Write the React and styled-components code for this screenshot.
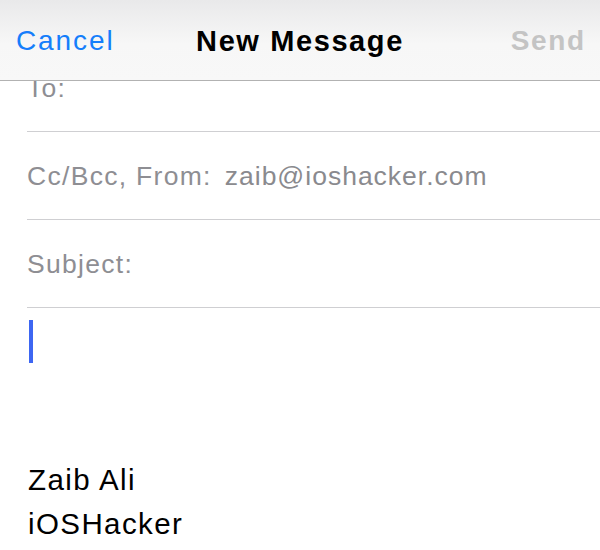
import styled, { createGlobalStyle } from 'styled-components'

const GlobalStyle = createGlobalStyle`
  html, body {
    margin: 0;
    padding: 0;
    background: #ffffff;
  }
  body {
    font-family: "Liberation Sans", Arial, Helvetica, sans-serif;
    -webkit-font-smoothing: antialiased;
  }
`

const Screen = styled.div`
  position: relative;
  width: 600px;
  height: 550px;
  overflow: hidden;
  background: #ffffff;
`

const NavBar = styled.header`
  position: absolute;
  top: 0;
  left: 0;
  right: 0;
  z-index: 2;
  height: 81px;
  box-sizing: border-box;
  padding: 0 16px;
  display: grid;
  grid-template-columns: 1fr auto 1fr;
  align-items: center;
  background: linear-gradient(#e9e9ea, #f7f7f7 55%, #f8f8f8);
  border-bottom: 1.5px solid #b2b2b2;
`

const NavButton = styled.span`
  font-size: 28px;
  padding-top: 2px;
  letter-spacing: ${(p) => (p.$disabled ? '1.6px' : '1.9px')};
  color: ${(p) => (p.$disabled ? '#c4c4c4' : '#157efb')};
  font-weight: ${(p) => (p.$disabled ? 700 : 400)};
  justify-self: ${(p) => (p.$right ? 'end' : 'start')};
  margin-right: ${(p) => (p.$right ? '-1.6px' : '0')};
`

const Title = styled.h1`
  margin: 0;
  padding-top: 2px;
  font-size: 29px;
  font-weight: 700;
  color: #000000;
  letter-spacing: 1.6px;
`

const Body = styled.main`
  padding-top: 44px;
`

const FieldRow = styled.div`
  margin-left: 27px;
  height: 88px;
  box-sizing: border-box;
  border-bottom: 1.5px solid #cfcfd2;
  display: flex;
  align-items: center;
  gap: 13px;
  padding-top: 1px;
  font-size: 26.5px;
  letter-spacing: 1.3px;
  color: #8e8e93;
`

const FieldValue = styled.span`
  color: #8a8a8e;
  letter-spacing: 1px;
`

const Compose = styled.div`
  padding: 12px 0 0 29px;
  display: flex;
  flex-direction: column;
`

const Caret = styled.div`
  width: 4px;
  height: 43px;
  background: #3d66f2;
`

const Signature = styled.div`
  margin-top: 95px;
  font-size: 29.5px;
  line-height: 44px;
  letter-spacing: 1.4px;
  color: #000000;
  margin-left: -1px;
`

export default function App() {
  const fields = [
    { label: 'To:' },
    { label: 'Cc/Bcc, From:', value: 'zaib@ioshacker.com' },
    { label: 'Subject:' },
  ]

  return (
    <>
      <GlobalStyle />
      <Screen>
        <NavBar>
          <NavButton>Cancel</NavButton>
          <Title>New Message</Title>
          <NavButton $right $disabled>Send</NavButton>
        </NavBar>
        <Body>
          {fields.map((f) => (
            <FieldRow key={f.label}>
              <span>{f.label}</span>
              {f.value && <FieldValue>{f.value}</FieldValue>}
            </FieldRow>
          ))}
          <Compose>
            <Caret />
            <Signature>
              <div>Zaib Ali</div>
              <div>iOSHacker</div>
            </Signature>
          </Compose>
        </Body>
      </Screen>
    </>
  )
}
